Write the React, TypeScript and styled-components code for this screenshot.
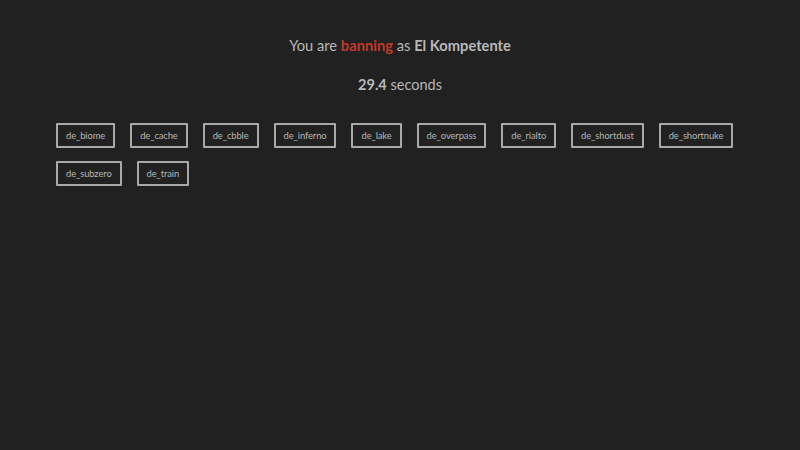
import React from 'react';
import styled, { createGlobalStyle } from 'styled-components';

const GlobalStyle = createGlobalStyle`
  html, body {
    margin: 0;
    padding: 0;
    background-color: #212121;
    font-family: Lato, "Open Sans", "Liberation Sans", sans-serif;
    color: #b8b8b8;
  }
`;

const Page = styled.div`
  min-height: 100vh;
  padding: 36px 56px 0;
  box-sizing: border-box;
`;

const Title = styled.h2`
  margin: 0;
  text-align: center;
  font-size: 14.7px;
  font-weight: 400;
  line-height: 18px;
  color: #b8b8b8;

  strong {
    font-weight: 700;
  }
`;

const Action = styled.strong`
  color: #c0392b;
`;

const Timer = styled.div`
  margin-top: 22px;
  text-align: center;
  font-size: 14.5px;
  line-height: 18px;

  strong {
    font-weight: 700;
  }
`;

const MapList = styled.div`
  display: flex;
  flex-wrap: wrap;
  gap: 13px 15px;
  margin-top: 29px;
`;

const MapButton = styled.button`
  height: 25px;
  padding: 0 8px;
  background: transparent;
  border: 2px solid #a9a9a9;
  border-radius: 1px;
  color: #b5b5b5;
  font-family: inherit;
  font-size: 9.4px;
  letter-spacing: -0.1px;
  cursor: pointer;

  &:hover {
    border-color: #c0392b;
  }
`;

const maps = [
  'de_biome',
  'de_cache',
  'de_cbble',
  'de_inferno',
  'de_lake',
  'de_overpass',
  'de_rialto',
  'de_shortdust',
  'de_shortnuke',
  'de_subzero',
  'de_train',
];

const App: React.FC = () => {
  return (
    <>
      <GlobalStyle />
      <Page>
        <Title>
          You are <Action>banning</Action> as <strong>El Kompetente</strong>
        </Title>
        <Timer>
          <strong>29.4</strong> seconds
        </Timer>
        <MapList>
          {maps.map((map) => (
            <MapButton key={map}>{map}</MapButton>
          ))}
        </MapList>
      </Page>
    </>
  );
};

export default App;
